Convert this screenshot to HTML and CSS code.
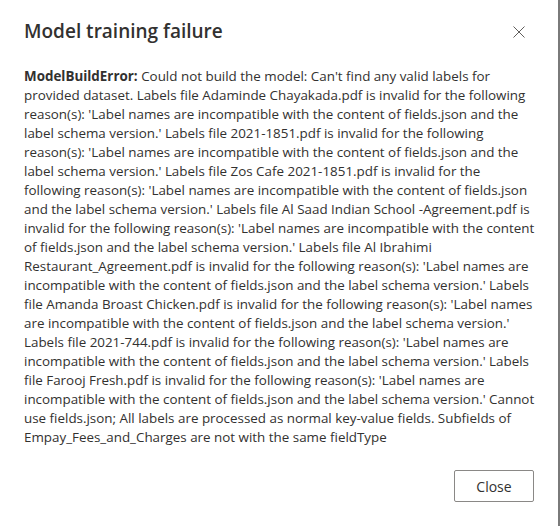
FILE: index.html
```html
<!DOCTYPE html>
<html>
<head>
<meta charset="utf-8">
<link rel="stylesheet" href="styles.css">
</head>
<body>
<div class="dialog">
  <div class="header">
    <h1 class="title">Model training failure</h1>
    <button class="close-x" aria-label="Close">
      <svg width="12" height="12" viewBox="0 0 12 12"><path d="M0.5 0.5 L11.5 11.5 M11.5 0.5 L0.5 11.5" stroke="#605e5c" stroke-width="1" fill="none"/></svg>
    </button>
  </div>
  <div class="content">
    <p class="message"><b>ModelBuildError:</b> Could not build the model: Can't find any valid labels for<br>provided dataset. Labels file Adaminde Chayakada.pdf is invalid for the following<br>reason(s): 'Label names are incompatible with the content of fields.json and the<br>label schema version.' Labels file 2021-1851.pdf is invalid for the following<br>reason(s): 'Label names are incompatible with the content of fields.json and the<br>label schema version.' Labels file Zos Cafe 2021-1851.pdf is invalid for the<br>following reason(s): 'Label names are incompatible with the content of fields.json<br>and the label schema version.' Labels file Al Saad Indian School -Agreement.pdf is<br>invalid for the following reason(s): 'Label names are incompatible with the content<br>of fields.json and the label schema version.' Labels file Al Ibrahimi<br>Restaurant_Agreement.pdf is invalid for the following reason(s): 'Label names are<br>incompatible with the content of fields.json and the label schema version.' Labels<br>file Amanda Broast Chicken.pdf is invalid for the following reason(s): 'Label names<br>are incompatible with the content of fields.json and the label schema version.'<br>Labels file 2021-744.pdf is invalid for the following reason(s): 'Label names are<br>incompatible with the content of fields.json and the label schema version.' Labels<br>file Farooj Fresh.pdf is invalid for the following reason(s): 'Label names are<br>incompatible with the content of fields.json and the label schema version.' Cannot<br>use fields.json; All labels are processed as normal key-value fields. Subfields of<br>Empay_Fees_and_Charges are not with the same fieldType</p>
  </div>
  <div class="footer">
    <button class="btn">Close</button>
  </div>
</div>
</body>
</html>
```
FILE: styles.css
```css
html, body {
  margin: 0;
  padding: 0;
  background: #ffffff;
}
body {
  font-family: "Open Sans", "Noto Sans", sans-serif;
  color: #323130;
}
.dialog {
  width: 558px;
  height: 526px;
  border-right: 2px solid #7a7a7a;
  display: flex;
  flex-direction: column;
  background: #fff;
}
.header {
  display: flex;
  align-items: flex-start;
  justify-content: space-between;
  padding: 17px 32px 0 24px;
  height: 49px;
  box-sizing: border-box;
}
.title {
  margin: 0;
  font-size: 19px;
  font-weight: 600;
  line-height: 28px;
  color: #323130;
}
.close-x {
  border: none;
  background: none;
  padding: 0;
  margin-top: 8px;
  width: 14px;
  height: 14px;
  display: flex;
  align-items: center;
  justify-content: center;
}
.content {
  padding: 18px 24px 0 24px;
}
.message {
  margin: 0;
  font-size: 13.4px;
  line-height: 19px;
  white-space: nowrap;
  color: #323130;
}
.message b {
  font-weight: 700;
}
.footer {
  display: flex;
  justify-content: flex-end;
  padding: 0 24px 0 24px;
  margin-top: auto;
  margin-bottom: 24px;
}
.btn {
  width: 80px;
  height: 32px;
  border: 1px solid #8a8886;
  border-radius: 2px;
  background: #fff;
  font-family: "Open Sans", "Noto Sans", sans-serif;
  font-size: 14px;
  font-weight: 400;
  color: #323130;
  padding: 0;
}
```
